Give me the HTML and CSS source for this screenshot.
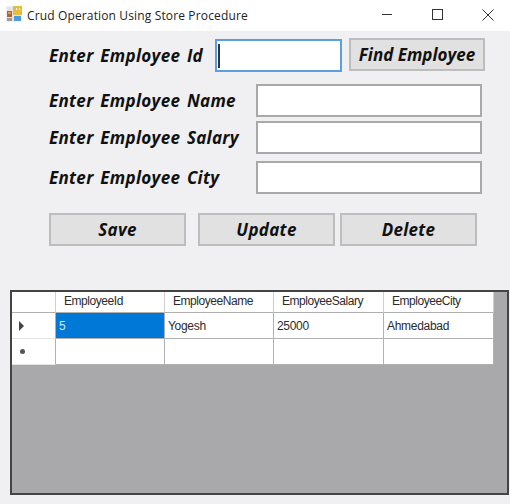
FILE: index.html
```html
<!DOCTYPE html>
<html lang="en">
<head>
    <meta charset="UTF-8">
    <title>Crud Operation Using Store Procedure</title>
    <link rel="stylesheet" href="styles.css">
</head>
<body>
    <div class="window">
        <div class="title-bar">
            <svg class="app-icon" width="16" height="16" viewBox="0 0 16 16">
                <rect x="0.5" y="0.5" width="15" height="15" fill="#e4e4e4"/>
                <rect x="7" y="0" width="9" height="9" fill="#e8bd3c"/>
                <rect x="10" y="2" width="1" height="2" fill="#fff"/>
                <rect x="13" y="2" width="1" height="2" fill="#fff"/>
                <rect x="1" y="5" width="5" height="6" fill="#b0642c"/>
                <rect x="2" y="6" width="3" height="2" fill="#e09a5c"/>
                <rect x="8" y="10" width="7" height="5" fill="#4d9bdc"/>
                <rect x="1" y="12" width="5" height="3" fill="#9a9a9a"/>
            </svg>
            <span class="title">Crud Operation Using Store Procedure</span>
            <div class="window-controls">
                <svg width="12" height="12" viewBox="0 0 12 12"><path d="M0 5.5H10" stroke="#333" fill="none"/></svg>
                <svg width="12" height="12" viewBox="0 0 12 12"><rect x="0.5" y="0.5" width="10" height="10" stroke="#333" fill="none"/></svg>
                <svg width="12" height="12" viewBox="0 0 12 12"><path d="M0.5 0.5L11.5 11.5M11.5 0.5L0.5 11.5" stroke="#333" fill="none"/></svg>
            </div>
        </div>

        <form class="employee-form">
            <div class="form-row find-row">
                <label class="label-id" for="employeeId">Enter Employee Id</label>
                <div class="text-box focused" id="employeeId"><span class="caret"></span></div>
                <button type="button" class="btn btn-find">Find Employee</button>
            </div>
            <div class="form-row name-row">
                <label for="employeeName">Enter Employee Name</label>
                <input type="text" class="text-box" id="employeeName">
            </div>
            <div class="form-row salary-row">
                <label for="employeeSalary">Enter Employee Salary</label>
                <input type="text" class="text-box" id="employeeSalary">
            </div>
            <div class="form-row city-row">
                <label for="employeeCity">Enter Employee City</label>
                <input type="text" class="text-box" id="employeeCity">
            </div>
            <div class="button-row">
                <button type="button" class="btn">Save</button>
                <button type="button" class="btn btn-update">Update</button>
                <button type="button" class="btn btn-delete">Delete</button>
            </div>
        </form>

        <div class="data-grid">
            <div class="grid-table">
                <div class="cell head corner"></div>
                <div class="cell head">EmployeeId</div>
                <div class="cell head">EmployeeName</div>
                <div class="cell head">EmployeeSalary</div>
                <div class="cell head">EmployeeCity</div>

                <div class="cell row-head"><span class="arrow"></span></div>
                <div class="cell selected">5</div>
                <div class="cell">Yogesh</div>
                <div class="cell">25000</div>
                <div class="cell">Ahmedabad</div>

                <div class="cell row-head"><span class="dot"></span></div>
                <div class="cell"></div>
                <div class="cell"></div>
                <div class="cell"></div>
                <div class="cell"></div>
            </div>
        </div>
    </div>
</body>
</html>
```

FILE: styles.css
```css
* {
    box-sizing: border-box;
}

html,
body {
    margin: 0;
    height: 100%;
}

body {
    background: #f0eff1;
    overflow: hidden;
}

.window {
    width: 510px;
    height: 504px;
    display: flex;
    flex-direction: column;
}

.title-bar {
    height: 31px;
    flex: none;
    background: #fff;
    display: flex;
    align-items: center;
    padding-left: 6px;
}

.app-icon {
    margin-top: -3px;
}

.title {
    margin-left: 5px;
    font-family: "Open Sans", sans-serif;
    font-size: 12px;
    letter-spacing: 0.14px;
    color: #222;
}

.window-controls {
    margin-left: auto;
    width: 128px;
    padding-right: 16px;
    display: flex;
    justify-content: space-between;
    margin-top: -2px;
}

.employee-form {
    padding-left: 49px;
    height: 259px;
    flex: none;
}

.form-row {
    display: flex;
    align-items: center;
}

label {
    font-family: "Open Sans", sans-serif;
    font-weight: 700;
    font-style: italic;
    font-size: 17px;
    letter-spacing: 0.3px;
    word-spacing: 2px;
    color: #111;
    width: 207px;
    flex: none;
    white-space: nowrap;
}

.text-box {
    width: 226px;
    height: 33px;
    background: #fff;
    border: 2px solid #a9a9a9;
    border-radius: 0;
    padding: 0;
    outline: none;
}

.find-row {
    margin-top: 8px;
    height: 33px;
}

.label-id {
    width: 166px;
}

.focused {
    width: 127px;
    border: 2px solid #5b9fdc;
    display: flex;
    align-items: center;
    padding-left: 1px;
}

.caret {
    width: 2px;
    height: 24px;
    background: #333;
}

.name-row {
    margin-top: 12px;
}

.salary-row {
    margin-top: 4px;
}

.city-row {
    margin-top: 7px;
}

.btn {
    width: 137px;
    height: 33px;
    background: #e1e1e1;
    border: 2px solid #bdbdbd;
    border-radius: 0;
    padding: 0;
    font-family: "Open Sans", sans-serif;
    font-weight: 700;
    font-style: italic;
    font-size: 17px;
    letter-spacing: 0.3px;
    color: #111;
}

.btn-find {
    width: 136px;
    margin-left: 7px;
    margin-top: -2px;
    letter-spacing: 0;
}

.button-row {
    display: flex;
    margin-top: 19px;
}

.btn-update {
    margin-left: 12px;
}

.btn-delete {
    margin-left: 5px;
}

.data-grid {
    margin-left: 10px;
    width: 499px;
    height: 205px;
    flex: none;
    background: #a9a8aa;
    border: 2px solid #444;
}

.grid-table {
    display: grid;
    grid-template-columns: 44px 109px 109px 110px 110px;
    grid-template-rows: 21px 26px 26px;
    width: 482px;
}

.cell {
    background: #fff;
    border-right: 1px solid #b0b0b0;
    border-bottom: 1px solid #b0b0b0;
    font-family: "Liberation Sans", sans-serif;
    font-size: 12px;
    letter-spacing: -0.3px;
    color: #2b2b2b;
    padding-left: 3px;
    display: flex;
    align-items: center;
}

.head {
    padding-left: 8px;
    padding-bottom: 2px;
    letter-spacing: -0.45px;
    border-right-color: #d0d0d0;
}

.row-head {
    padding-left: 7px;
    border-bottom-color: #e4e4e4;
}

.selected {
    background: #0078d7;
    color: #cfe6fa;
}

.arrow {
    width: 0;
    height: 0;
    border-left: 5px solid #444;
    border-top: 5px solid transparent;
    border-bottom: 5px solid transparent;
}

.dot {
    width: 5px;
    height: 5px;
    border-radius: 50%;
    background: #555;
    margin-left: 1px;
}
```
